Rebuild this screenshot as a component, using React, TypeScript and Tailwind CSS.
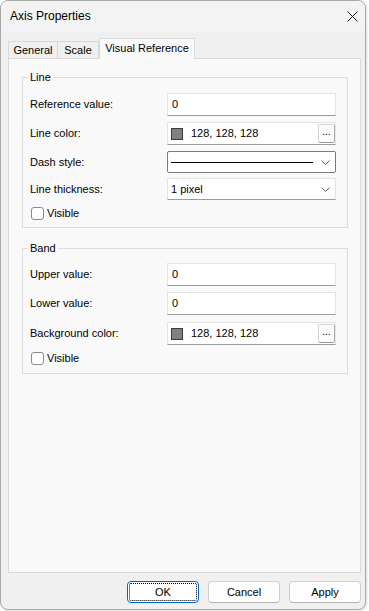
import type { ReactNode } from "react";

function Chevron() {
  return (
    <svg width="9" height="5" viewBox="0 0 9 5" className="text-[#5f5f5f]">
      <path d="M0.5 0.5 L4.5 4.5 L8.5 0.5" fill="none" stroke="currentColor" strokeWidth="1" />
    </svg>
  );
}

function CloseIcon() {
  return (
    <svg width="11" height="11" viewBox="0 0 11 11" className="text-[#1a1a1a]">
      <path d="M0.5 0.5 L10.5 10.5 M10.5 0.5 L0.5 10.5" stroke="currentColor" strokeWidth="1" />
    </svg>
  );
}

function TextBox({ value }: { value: string }) {
  return (
    <div className="flex h-[23px] w-[169px] items-center border border-[#e3e3e3] border-b-[#9c9c9c] bg-white pl-[4px]">
      {value}
    </div>
  );
}

function ColorBox({ value }: { value: string }) {
  return (
    <div className="flex h-[23px] w-[169px] items-center border border-[#e3e3e3] border-b-[#9c9c9c] bg-white pl-[3px]">
      <span className="h-[12px] w-[12px] border border-[#3c3c3c] bg-[#808080]" />
      <span className="ml-[8px] flex-1">{value}</span>
      <button className="flex h-[19px] w-[17px] items-center justify-center rounded-[2px] border border-[#d4d4d4] border-b-[#9a9a9a] border-r-[#b0b0b0] bg-[#fbfbfb] pb-[3px] text-[10px] leading-none">
        ...
      </button>
    </div>
  );
}

function Row({ label, className, children }: { label: string; className: string; children: ReactNode }) {
  return (
    <div className={`flex items-center justify-between ${className}`}>
      <span>{label}</span>
      {children}
    </div>
  );
}

function CheckRow({ className }: { className: string }) {
  return (
    <div className={`flex h-[13px] items-center pl-px ${className}`}>
      <span className="h-[13px] w-[13px] rounded-[3px] border border-[#8a8a8a] bg-white" />
      <span className="ml-[3px]">Visible</span>
    </div>
  );
}

function Group({ title, className, children }: { title: string; className: string; children: ReactNode }) {
  return (
    <div className={`ml-[13px] w-[326px] border border-[#dcdcdc] pl-[7px] pr-[11px] ${className}`}>
      <div className="-mt-[8px] h-[14px] leading-[14px]">
        <span className="-ml-[2px] bg-[#f9f9f9] px-[2px]">{title}</span>
      </div>
      {children}
    </div>
  );
}

function Button({ label, focused }: { label: string; focused?: boolean }) {
  return (
    <button
      className={`flex h-[22px] w-[72px] items-center justify-center rounded-[4px] border bg-[#fdfdfd] ${
        focused
          ? "border-[#0067c0] outline-1 outline-dotted outline-black -outline-offset-3"
          : "border-[#d0d0d0] border-b-[#b4b4b4]"
      }`}
    >
      {label}
    </button>
  );
}

export default function App() {
  return (
    <div className="h-[611px] w-[369px] bg-white font-['Liberation_Sans',Arial,sans-serif] text-[11px] text-black">
      <div className="flex h-[610px] w-[366px] flex-col overflow-hidden rounded-[8px] border border-[#a8a8a8] bg-[#f0f0f0] shadow-[1px_1px_3px_rgba(0,0,0,0.15)]">
        <div className="flex h-[30px] shrink-0 items-center justify-between bg-[#f3f3f3] pl-[9px] pr-[7px]">
          <span className="text-[12px]">Axis Properties</span>
          <CloseIcon />
        </div>

        <div className="flex flex-1 flex-col pl-[7px] pt-[7px]">
          <div className="relative z-10 -mb-px flex h-[21px] items-end">
            <div className="mb-px flex h-[17px] w-[50px] items-center justify-center border border-b-0 border-[#d9d9d9] bg-[#f0f0f0] pt-px">
              General
            </div>
            <div className="mb-px flex h-[17px] w-[41px] items-center justify-center border border-b-0 border-l-0 border-[#d9d9d9] bg-[#f0f0f0] pt-px">
              Scale
            </div>
            <div className="flex h-[21px] w-[96px] items-center justify-center border border-b-0 border-[#d9d9d9] bg-[#f9f9f9] pb-[2px]">
              Visual Reference
            </div>
          </div>

          <div className="h-[515px] w-[353px] border border-[#d9d9d9] bg-[#f9f9f9]">
            <Group title="Line" className="mt-[18px] pb-[7px]">
              <Row label="Reference value:" className="mt-[9px]">
                <TextBox value="0" />
              </Row>
              <Row label="Line color:" className="mt-[6px]">
                <ColorBox value="128, 128, 128" />
              </Row>
              <Row label="Dash style:" className="mt-[6px]">
                <div className="flex h-[22px] w-[169px] items-center rounded-[2px] border border-[#7a7a7a] bg-white pl-[3px] pr-[5px]">
                  <span className="h-px flex-1 bg-black" />
                  <span className="ml-[8px]">
                    <Chevron />
                  </span>
                </div>
              </Row>
              <Row label="Line thickness:" className="mt-[5px]">
                <div className="flex h-[22px] w-[169px] items-center justify-between border border-[#e3e3e3] border-b-[#9c9c9c] bg-white pl-[3px] pr-[5px]">
                  <span>1 pixel</span>
                  <Chevron />
                </div>
              </Row>
              <CheckRow className="mt-[7px]" />
            </Group>

            <Group title="Band" className="mt-[20px] pb-[8px]">
              <Row label="Upper value:" className="mt-[8px]">
                <TextBox value="0" />
              </Row>
              <Row label="Lower value:" className="mt-[6px]">
                <TextBox value="0" />
              </Row>
              <Row label="Background color:" className="mt-[7px]">
                <ColorBox value="128, 128, 128" />
              </Row>
              <CheckRow className="mt-[7px]" />
            </Group>
          </div>

          <div className="mt-[8px] flex w-[353px] justify-end gap-[9px]">
            <Button label="OK" focused />
            <Button label="Cancel" />
            <Button label="Apply" />
          </div>
        </div>
      </div>
    </div>
  );
}
